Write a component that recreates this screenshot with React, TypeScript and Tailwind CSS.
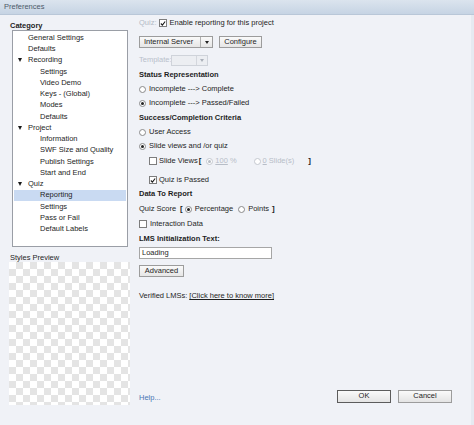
import React from "react";

type Node = { label: string; level: number; open?: boolean; selected?: boolean };

const tree: Node[] = [
  { label: "General Settings", level: 0 },
  { label: "Defaults", level: 0 },
  { label: "Recording", level: 0, open: true },
  { label: "Settings", level: 1 },
  { label: "Video Demo", level: 1 },
  { label: "Keys - (Global)", level: 1 },
  { label: "Modes", level: 1 },
  { label: "Defaults", level: 1 },
  { label: "Project", level: 0, open: true },
  { label: "Information", level: 1 },
  { label: "SWF Size and Quality", level: 1 },
  { label: "Publish Settings", level: 1 },
  { label: "Start and End", level: 1 },
  { label: "Quiz", level: 0, open: true },
  { label: "Reporting", level: 1, selected: true },
  { label: "Settings", level: 1 },
  { label: "Pass or Fail", level: 1 },
  { label: "Default Labels", level: 1 },
];

function Check({ checked, className = "" }: { checked?: boolean; className?: string }) {
  return (
    <span className={"w-[8px] h-[8px] border border-[#7d7d7d] bg-white flex items-center justify-center shrink-0 " + className}>
      {checked && (
        <svg width="7" height="7" viewBox="0 0 7 7">
          <path d="M1 3.5 L2.8 5.3 L6 1.2" stroke="#1b1b1b" strokeWidth="1.3" fill="none" />
        </svg>
      )}
    </span>
  );
}

function Radio({ on, disabled, className = "" }: { on?: boolean; disabled?: boolean; className?: string }) {
  return (
    <span
      className={
        "w-[7px] h-[7px] rounded-full border bg-white flex items-center justify-center shrink-0 " +
        (disabled ? "border-[#c4c8cf] " : "border-[#8a8a8a] ") +
        className
      }
    >
      {on && <span className={"w-[3px] h-[3px] rounded-full " + (disabled ? "bg-[#b8bcc4]" : "bg-[#222]")} />}
    </span>
  );
}

function Row({ children, className = "" }: { children: React.ReactNode; className?: string }) {
  return <div className={"h-[14px] flex items-center " + className}>{children}</div>;
}

export default function App() {
  return (
    <div className="w-[474px] h-[425px] bg-[#f0f2f7] text-[#1e1e1e] text-[7.5px] leading-none overflow-hidden flex flex-col" style={{ fontFamily: '"Liberation Sans", Arial, sans-serif' }}>
      <div className="h-[15px] shrink-0 bg-gradient-to-b from-[#dbe4ee] to-[#c6d4e4] border-b border-[#b9c7d8] flex items-center pl-[4px] text-[#4d5a69]">
        Preferences
      </div>

      <div className="flex flex-1 border-r-[3px] border-[#e6eaf1]">
        {/* left column */}
        <div className="w-[121px] ml-[9px] shrink-0 flex flex-col">
          <div className="h-[15px] flex items-end pl-[1px] font-bold pb-[1px]">Category</div>
          <div className="ml-[3px] w-[116px] h-[217px] border border-[#9a9ea6] bg-white pt-[1px] px-[1px]">
            {tree.map((n, i) => (
              <div
                key={i}
                className={"h-[11.25px] flex items-center relative " + (n.selected ? "bg-[#c9daf2]" : "")}
              >
                {n.open && (
                  <span className="absolute left-[4px] top-[3.5px] w-0 h-0 border-l-[2.5px] border-r-[2.5px] border-t-[4px] border-l-transparent border-r-transparent border-t-[#1a1a1a]" />
                )}
                <span className={n.level === 0 ? "pl-[14px]" : "pl-[26px]"}>{n.label}</span>
              </div>
            ))}
          </div>
          <div className="h-[15px] flex items-end pl-[1px] pb-[1px]">Styles Preview</div>
          <div className="w-[121px] h-[143px] bg-[conic-gradient(#e4e4e4_25%,#ffffff_0_50%,#e4e4e4_0_75%,#ffffff_0)] bg-[length:14px_14px]" />
        </div>

        {/* right column */}
        <div className="flex-1 ml-[9px] mr-[19px] flex flex-col">
          <Row className="mt-[1px]">
            <span className="text-[#b3bac6] mr-[2px]">Quiz:</span>
            <Check checked className="mr-[3px]" />
            <span>Enable reporting for this project</span>
          </Row>

          <div className="mt-[6px] h-[12px] flex items-center">
            <div className="w-[74px] h-[12px] border border-[#9c9c9c] bg-gradient-to-b from-[#fafafa] to-[#e6e6e6] flex items-center">
              <span className="flex-1 pl-[4px]">Internal Server</span>
              <span className="w-[12px] h-full border-l border-[#b0b0b0] flex items-center justify-center">
                <span className="w-0 h-0 border-l-[2.5px] border-r-[2.5px] border-t-[3.5px] border-l-transparent border-r-transparent border-t-[#222]" />
              </span>
            </div>
            <div className="ml-[6px] w-[43px] h-[12px] border border-[#9c9c9c] bg-gradient-to-b from-[#fafafa] to-[#e6e6e6] flex items-center justify-center">
              Configure
            </div>
          </div>

          <Row className="mt-[5px]">
            <span className="text-[#b9c0cb] w-[32px]">Template:</span>
            <div className="w-[37px] h-[11px] border border-[#cfd3da] bg-[#eceef2] flex items-center justify-end">
              <span className="w-[11px] h-full border-l border-[#d4d7dd] flex items-center justify-center">
                <span className="w-0 h-0 border-l-[2px] border-r-[2px] border-t-[3px] border-l-transparent border-r-transparent border-t-[#aab0ba]" />
              </span>
            </div>
          </Row>

          <Row className="mt-[1px] font-bold">Status Representation</Row>
          <Row>
            <Radio className="mr-[3px]" />
            <span>Incomplete ---&gt; Complete</span>
          </Row>
          <Row>
            <Radio on className="mr-[3px]" />
            <span>Incomplete ---&gt; Passed/Failed</span>
          </Row>

          <Row className="mt-[1px] font-bold">Success/Completion Criteria</Row>
          <Row>
            <Radio className="mr-[3px]" />
            <span>User Access</span>
          </Row>
          <Row>
            <Radio on className="mr-[3px]" />
            <span>Slide views and /or quiz</span>
          </Row>
          <Row className="mt-[1px] pl-[10px]">
            <Check className="mr-[2px]" />
            <span>Slide Views</span>
            <span className="font-bold ml-[1px] text-[8px]">[</span>
            <Radio on disabled className="ml-[5px] mr-[2px]" />
            <span className="text-[#b7bdc7]">
              <span className="underline">100</span> %
            </span>
            <Radio disabled className="ml-[17px] mr-[2px]" />
            <span className="text-[#b7bdc7]">
              <span className="underline">0</span> Slide(s)
            </span>
            <span className="font-bold ml-[14px] text-[8px]">]</span>
          </Row>
          <Row className="mt-[5px] pl-[10px]">
            <Check checked className="mr-[2px]" />
            <span>Quiz is Passed</span>
          </Row>

          <Row className="font-bold">Data To Report</Row>
          <Row className="mt-[1px]">
            <span>Quiz Score</span>
            <span className="font-bold ml-[4px] text-[8px]">[</span>
            <Radio on className="ml-[2px] mr-[3px]" />
            <span>Percentage</span>
            <Radio className="ml-[5px] mr-[3px]" />
            <span>Points</span>
            <span className="font-bold ml-[3px] text-[8px]">]</span>
          </Row>
          <Row className="mt-[1px]">
            <Check className="mr-[3px]" />
            <span>Interaction Data</span>
          </Row>
          <Row className="mt-[1px] font-bold">LMS Initialization Text:</Row>
          <div className="mt-[1px] w-[133px] h-[12px] border border-[#a6a6a6] bg-white flex items-center pl-[2px]">Loading</div>
          <div className="mt-[6px] w-[45px] h-[12px] border border-[#9c9c9c] bg-gradient-to-b from-[#fafafa] to-[#e6e6e6] flex items-center justify-center">
            Advanced
          </div>

          <Row className="mt-[12px]">
            <span>Verified LMSs:</span>
            <span className="ml-[2px] underline">[Click here to know more]</span>
          </Row>

          <div className="flex-1" />
          <div className="h-[14px] mb-[22px] flex items-center">
            <span className="text-[#4a78b4] mt-[3px]">Help...</span>
            <div className="flex-1" />
            <div className="w-[54px] h-[13px] border border-[#5c5c5c] bg-gradient-to-b from-[#fafafa] to-[#e4e4e4] flex items-center justify-center">
              OK
            </div>
            <div className="ml-[7px] w-[54px] h-[13px] border border-[#9c9c9c] bg-gradient-to-b from-[#fafafa] to-[#e4e4e4] flex items-center justify-center">
              Cancel
            </div>
          </div>
        </div>
      </div>
    </div>
  );
}
